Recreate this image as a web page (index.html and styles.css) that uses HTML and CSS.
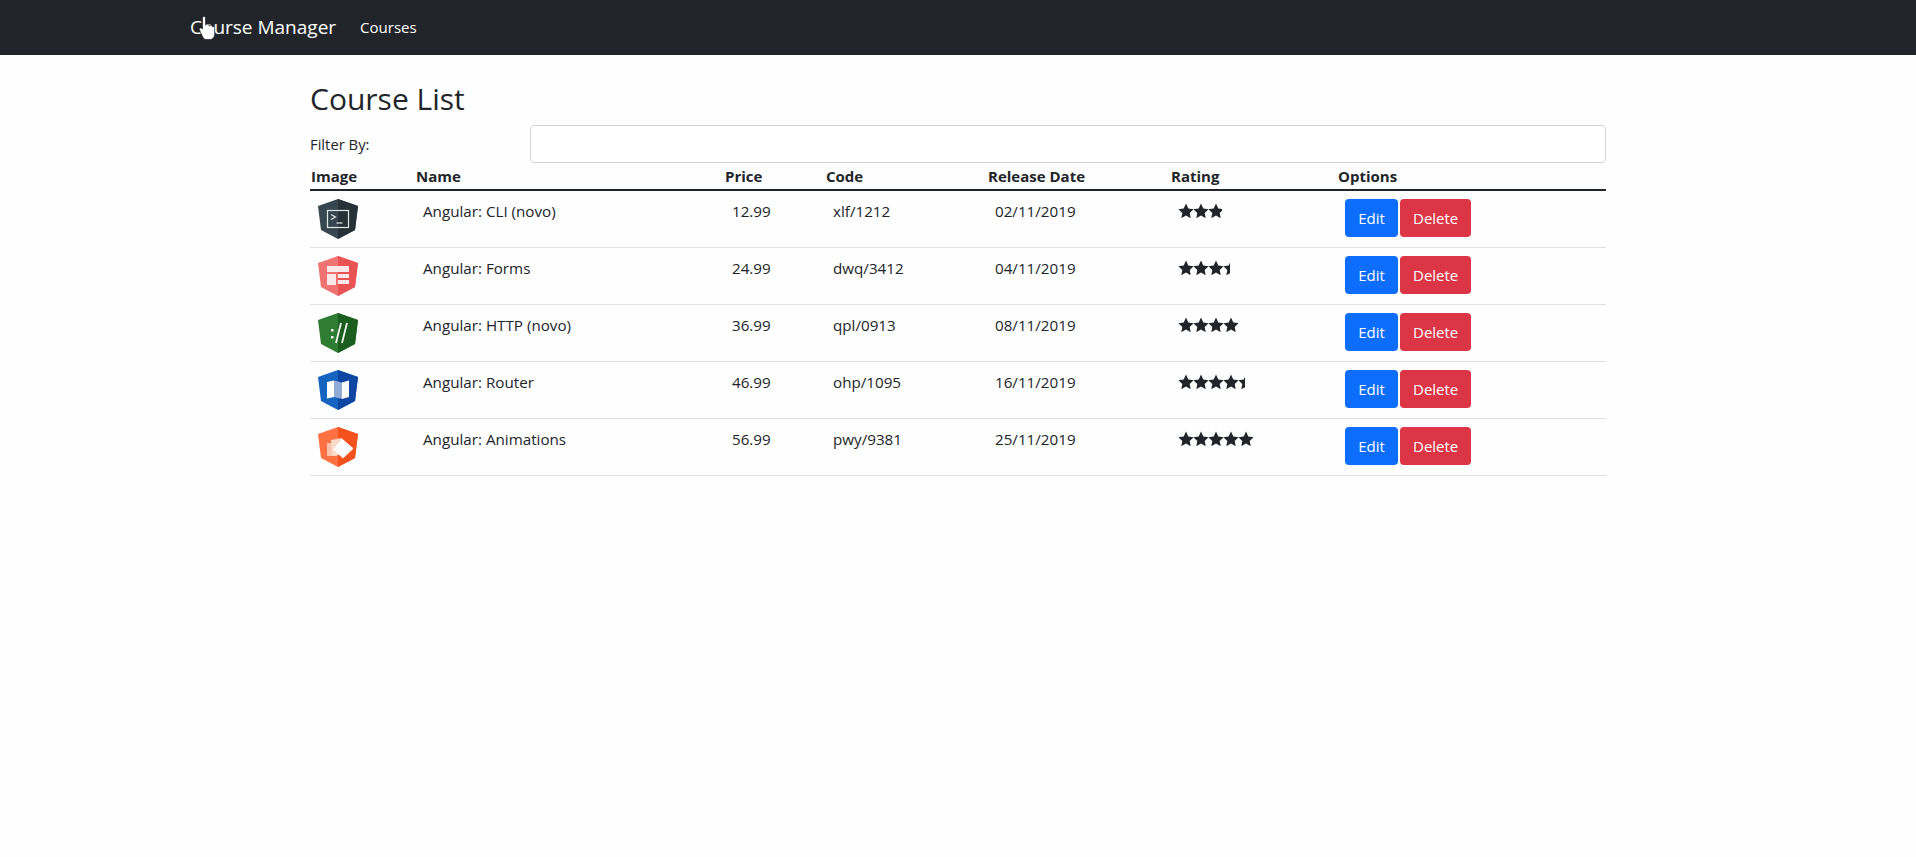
FILE: index.html
```html
<!DOCTYPE html>
<html lang="en">
<head>
  <meta charset="UTF-8" />
  <title>Course Manager</title>
  <link rel="stylesheet" href="styles.css">
</head>
<body>
  <svg class="defs">
    <defs>
      <path id="star" d="M8 .6l2.3 4.9 5.3.7-3.9 3.7 1 5.3L8 12.6l-4.7 2.6 1-5.3L.4 6.2l5.3-.7z" />
    </defs>
  </svg>

  <nav class="navbar">
    <a class="brand" href="#">Course Manager</a>
    <a class="nav-link" href="#">Courses</a>
    <svg class="cursor" width="16" height="24" viewBox="0 0 16 24">
      <path d="M3.5 2c0-2 3-2 3 0v7h1.200c0-1.500 2.300-1.500 2.300 0v1h1c0-1.500 2.200-1.500 2.200 0v1h.5c0-1 2-1 2 .5V18c0 3-2 5.500-4.500 5.500H7c-2 0-3-2-4-4L.5 14c-.8-1.800 1.500-3 3-1z" fill="#fff" stroke="#111" stroke-width=".6" />
    </svg>
  </nav>

  <main class="content">
    <h1>Course List</h1>
    <div class="filter">
      <label for="filter">Filter By:</label>
      <input id="filter" type="text" />
    </div>

    <table class="courses">
      <colgroup>
        <col class="c-image"><col class="c-name"><col class="c-price"><col class="c-code">
        <col class="c-date"><col class="c-rating"><col class="c-options">
      </colgroup>
      <thead>
        <tr>
          <th>Image</th><th>Name</th><th>Price</th><th>Code</th><th>Release Date</th><th>Rating</th><th>Options</th>
        </tr>
      </thead>
      <tbody>
        <tr>
          <td>
            <svg class="logo" viewBox="0 0 40 40">
              <path d="M20 0L40 7l-3 24-17 9-17-9L0 7z" fill="#37474f" />
              <path d="M20 0l20 7-3 24-17 9z" fill="#263238" />
              <rect x="9.500" y="11.500" width="21" height="17" fill="none" stroke="#dfe6e8" stroke-width="1.200" />
              <path d="M13 15.500l4.500 2.500-4.500 2.500" fill="none" stroke="#dfe6e8" stroke-width="1.200" />
              <path d="M18.500 24h6" stroke="#dfe6e8" stroke-width="1.200" />
            </svg>
          </td>
          <td>Angular: CLI (novo)</td><td>12.99</td><td>xlf/1212</td><td>02/11/2019</td>
          <td><svg class="stars" width="44" height="15"><use href="#star" x="0" /><use href="#star" x="15" /><use href="#star" x="30" /></svg></td>
          <td><button class="btn edit">Edit</button><button class="btn delete">Delete</button></td>
        </tr>
        <tr>
          <td>
            <svg class="logo" viewBox="0 0 40 40">
              <path d="M20 0L40 7l-3 24-17 9-17-9L0 7z" fill="#ef7373" />
              <path d="M20 0l20 7-3 24-17 9z" fill="#e95353" />
              <path d="M9 10h22v6H9zM9 18h9v11H9zM20 18h11v4H20zM20 24h11v4H20z" fill="#fbe9e9" />
            </svg>
          </td>
          <td>Angular: Forms</td><td>24.99</td><td>dwq/3412</td><td>04/11/2019</td>
          <td><svg class="stars" width="52" height="15"><use href="#star" x="0" /><use href="#star" x="15" /><use href="#star" x="30" /><svg x="45" width="7" height="15"><use href="#star" /></svg></svg></td>
          <td><button class="btn edit">Edit</button><button class="btn delete">Delete</button></td>
        </tr>
        <tr>
          <td>
            <svg class="logo" viewBox="0 0 40 40">
              <path d="M20 0L40 7l-3 24-17 9-17-9L0 7z" fill="#2e7d32" />
              <path d="M20 0l20 7-3 24-17 9z" fill="#1b5e20" />
              <path d="M13 16h2.500v2.500H13zM13 23h2.500v2.500H13z" fill="#eef5ee" />
              <path d="M23 10l-5 20M29 10l-5 20" stroke="#eef5ee" stroke-width="1.800" />
            </svg>
          </td>
          <td>Angular: HTTP (novo)</td><td>36.99</td><td>qpl/0913</td><td>08/11/2019</td>
          <td><svg class="stars" width="60" height="15"><use href="#star" x="0" /><use href="#star" x="15" /><use href="#star" x="30" /><use href="#star" x="45" /></svg></td>
          <td><button class="btn edit">Edit</button><button class="btn delete">Delete</button></td>
        </tr>
        <tr>
          <td>
            <svg class="logo" viewBox="0 0 40 40">
              <path d="M20 0L40 7l-3 24-17 9-17-9L0 7z" fill="#1565c0" />
              <path d="M20 0l20 7-3 24-17 9z" fill="#0d47a1" />
              <path d="M9 12l7-1.500V27l-7 1.500z" fill="#fff" />
              <path d="M16 10.500l8 2V29l-8-2z" fill="#8fabd6" />
              <path d="M24 12.500l7-2V27l-7 2z" fill="#fff" />
            </svg>
          </td>
          <td>Angular: Router</td><td>46.99</td><td>ohp/1095</td><td>16/11/2019</td>
          <td><svg class="stars" width="68" height="15"><use href="#star" x="0" /><use href="#star" x="15" /><use href="#star" x="30" /><use href="#star" x="45" /><svg x="60" width="7" height="15"><use href="#star" /></svg></svg></td>
          <td><button class="btn edit">Edit</button><button class="btn delete">Delete</button></td>
        </tr>
        <tr>
          <td>
            <svg class="logo" viewBox="0 0 40 40">
              <path d="M20 0L40 7l-3 24-17 9-17-9L0 7z" fill="#ff7043" />
              <path d="M20 0l20 7-3 24-17 9z" fill="#f4511e" />
              <path d="M9 16h10v13H9z" fill="#f8c4ae" />
              <path d="M13 13l11-2 4 16-14 2z" fill="#fbdcc8" />
              <path d="M24.500 12.500l10.500 9-10 9.500-9.500-9z" fill="#fff" stroke="#fff" stroke-linejoin="round" />
            </svg>
          </td>
          <td>Angular: Animations</td><td>56.99</td><td>pwy/9381</td><td>25/11/2019</td>
          <td><svg class="stars" width="76" height="15"><use href="#star" x="0" /><use href="#star" x="15" /><use href="#star" x="30" /><use href="#star" x="45" /><use href="#star" x="60" /></svg></td>
          <td><button class="btn edit">Edit</button><button class="btn delete">Delete</button></td>
        </tr>
      </tbody>
    </table>
  </main>
</body>
</html>
```

FILE: styles.css
```css
body {
  margin: 0;
  background: #fefefe;
  color: #212529;
  font-family: 'Open Sans', sans-serif;
  font-size: 15px;
  line-height: 24px;
}
.defs {
  display: none;
}
.navbar {
  position: relative;
  display: flex;
  align-items: center;
  height: 55px;
  padding-left: 190px;
  background: #212529;
}
.brand {
  margin-right: 24px;
  margin-top: -2px;
  color: #fff;
  font-size: 19px;
  text-decoration: none;
}
.nav-link {
  margin-top: -2px;
  color: #fff;
  font-size: 15px;
  text-decoration: none;
}
.cursor {
  position: absolute;
  left: 199px;
  top: 16px;
}
.content {
  width: 1296px;
  margin: 0 auto;
  padding-top: 25px;
}
h1 {
  margin: 0 0 7px;
  font-size: 30px;
  font-weight: 500;
  line-height: 38px;
}
.filter {
  display: flex;
  align-items: center;
}
.filter label {
  width: 220px;
  font-size: 14.8px;
}
.filter input {
  flex: 1;
  height: 38px;
  box-sizing: border-box;
  background: #fff;
  border: 1px solid #ced4da;
  border-radius: 4px;
}
.courses {
  width: 100%;
  table-layout: fixed;
  border-collapse: collapse;
}
.c-image { width: 105px; }
.c-name { width: 309px; }
.c-price { width: 101px; }
.c-code { width: 162px; }
.c-date { width: 183px; }
.c-rating { width: 167px; }
th {
  height: 26px;
  padding: 0 1px;
  text-align: left;
  font-size: 15px;
  font-weight: 700;
  border-bottom: 2px solid #212529;
}
td {
  height: 57px;
  padding: 8px 8px 0;
  box-sizing: border-box;
  vertical-align: top;
  font-size: 15.2px;
  border-bottom: 1px solid #dee2e6;
}
.logo {
  display: block;
  width: 40px;
  height: 40px;
}
.stars {
  display: block;
  margin-top: 4px;
  fill: #212529;
}
.btn {
  height: 38px;
  padding: 0 12px;
  border: 1px solid transparent;
  border-radius: 4px;
  color: #fff;
  font-family: inherit;
  font-size: 15px;
}
.edit {
  width: 53px;
  margin-right: 2px;
  background: #0d6efd;
}
.delete {
  width: 71px;
  background: #dc3545;
}
```
